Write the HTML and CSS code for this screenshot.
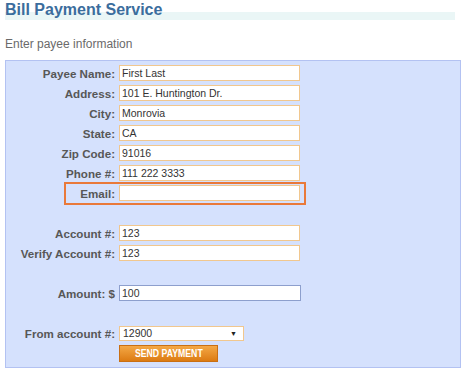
FILE: index.html
```html
<!DOCTYPE html>
<html lang="en">
<head>
    <meta charset="UTF-8">
    <title>Bill Payment Service</title>
    <link rel="stylesheet" href="styles.css">
</head>
<body>
    <div class="page">
        <h1 class="title">Bill Payment Service</h1>
        <p class="subtitle">Enter payee information</p>

        <form class="pay-form">
            <div class="row">
                <label class="label">Payee Name:</label>
                <input class="field" type="text" value="First Last">
            </div>
            <div class="row">
                <label class="label">Address:</label>
                <input class="field" type="text" value="101 E. Huntington Dr.">
            </div>
            <div class="row">
                <label class="label">City:</label>
                <input class="field" type="text" value="Monrovia">
            </div>
            <div class="row">
                <label class="label">State:</label>
                <input class="field" type="text" value="CA">
            </div>
            <div class="row">
                <label class="label">Zip Code:</label>
                <input class="field" type="text" value="91016">
            </div>
            <div class="row">
                <label class="label">Phone #:</label>
                <input class="field" type="text" value="111 222 3333">
            </div>
            <div class="row highlight">
                <label class="label">Email:</label>
                <input class="field" type="text" value="">
            </div>
            <div class="row spacer"></div>
            <div class="row">
                <label class="label">Account #:</label>
                <input class="field" type="text" value="123">
            </div>
            <div class="row">
                <label class="label">Verify Account #:</label>
                <input class="field" type="text" value="123">
            </div>
            <div class="row spacer"></div>
            <div class="row">
                <label class="label">Amount: $</label>
                <input class="field amount" type="text" value="100">
            </div>
            <div class="row spacer"></div>
            <div class="row">
                <label class="label">From account #:</label>
                <div class="select">
                    <span>12900</span>
                    <span class="arrow">&#9660;</span>
                </div>
            </div>
            <div class="row">
                <span class="label"></span>
                <button class="send-button" type="button"><span class="send-text">SEND PAYMENT</span></button>
            </div>
        </form>
    </div>
</body>
</html>
```

FILE: styles.css
```css
body {
    margin: 0;
    padding: 0;
    background-color: #fff;
    font-family: "Liberation Sans", Arial, sans-serif;
}
.page {
    padding: 0 0 0 5px;
}
.title {
    margin: 0;
    width: 450px;
    height: 24px;
    font-size: 16px;
    line-height: 20px;
    color: #3b6d9d;
    background: linear-gradient(to bottom, transparent 12px, #eaf6f6 12px, #eaf6f6 20px, transparent 20px);
}
.subtitle {
    margin: 13px 0 0 0;
    font-size: 12px;
    line-height: 14px;
    color: #6a6a6a;
}
.pay-form {
    box-sizing: border-box;
    width: 456px;
    height: 308px;
    margin-top: 9px;
    padding: 4px 0 0 0;
    background-color: #d5e1fd;
    border: 1px solid #b3c2f2;
}
.row {
    display: flex;
    align-items: center;
    height: 16px;
    margin-bottom: 4px;
}
.label {
    width: 109px;
    margin-right: 4px;
    text-align: right;
    font-size: 11.6px;
    font-weight: bold;
    color: #575757;
}
.field {
    box-sizing: border-box;
    width: 181px;
    height: 16px;
    padding: 0 2px;
    border: 1px solid #f1c78e;
    background-color: #fff;
    font-family: "Liberation Sans", Arial, sans-serif;
    font-size: 10.5px;
    color: #333;
    outline: none;
}
.field.amount {
    width: 182px;
    border-color: #8d9fcd;
}
.highlight {
    position: relative;
    margin-top: 1px;
}
.highlight::after {
    content: "";
    position: absolute;
    left: 58px;
    top: -3px;
    width: 238px;
    height: 19px;
    border: 2px solid #e9793a;
}
.select {
    box-sizing: border-box;
    display: flex;
    justify-content: space-between;
    align-items: center;
    width: 125px;
    height: 15px;
    padding: 0 6px 0 3px;
    border: 1px solid #f1c78e;
    background-color: #fff;
    font-size: 10.5px;
    color: #333;
}
.arrow {
    font-size: 7px;
    color: #222;
}
.send-button {
    box-sizing: border-box;
    width: 99px;
    height: 17px;
    padding: 0;
    border: 1px solid #c96f14;
    background: linear-gradient(to bottom, #f4a846, #dc7b13);
    color: #fff;
    font-family: "Liberation Sans", Arial, sans-serif;
    font-size: 10.5px;
    font-weight: bold;
}
.send-text {
    display: inline-block;
    transform: scaleX(0.83);
}
```
